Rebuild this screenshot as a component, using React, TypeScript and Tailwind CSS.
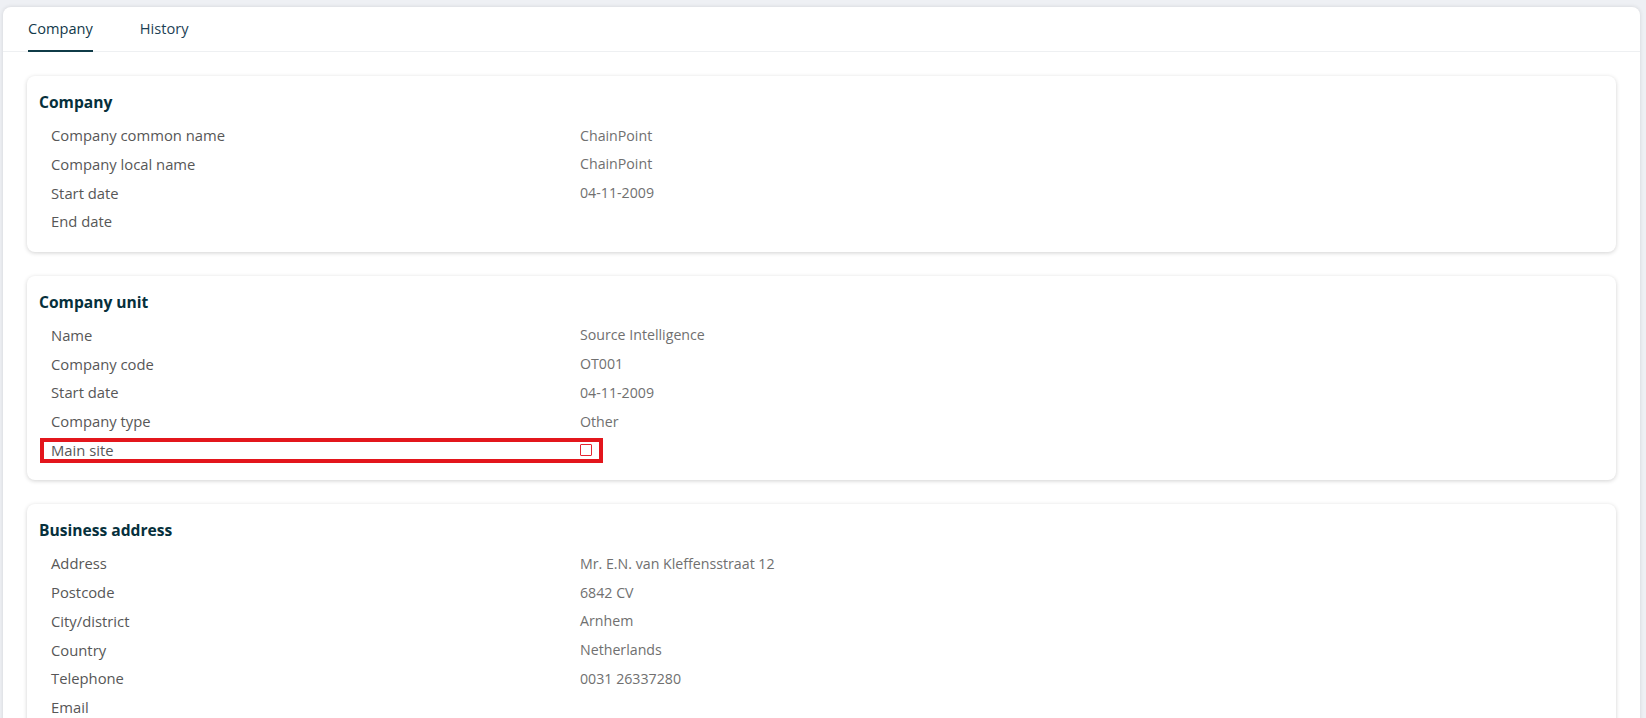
import React from 'react';

type Row = { label: string; value?: string; checkbox?: boolean; marked?: boolean };

const sections: { title: string; rows: Row[] }[] = [
  {
    title: 'Company',
    rows: [
      { label: 'Company common name', value: 'ChainPoint' },
      { label: 'Company local name', value: 'ChainPoint' },
      { label: 'Start date', value: '04-11-2009' },
      { label: 'End date' },
    ],
  },
  {
    title: 'Company unit',
    rows: [
      { label: 'Name', value: 'Source Intelligence' },
      { label: 'Company code', value: 'OT001' },
      { label: 'Start date', value: '04-11-2009' },
      { label: 'Company type', value: 'Other' },
      { label: 'Main site', checkbox: true, marked: true },
    ],
  },
  {
    title: 'Business address',
    rows: [
      { label: 'Address', value: 'Mr. E.N. van Kleffensstraat 12' },
      { label: 'Postcode', value: '6842 CV' },
      { label: 'City/district', value: 'Arnhem' },
      { label: 'Country', value: 'Netherlands' },
      { label: 'Telephone', value: '0031 26337280' },
      { label: 'Email' },
    ],
  },
];

const InfoRow: React.FC<{ row: Row }> = ({ row }) => (
  <div className="relative flex items-center h-[28.7px] pl-3">
    {row.marked && (
      <div className="absolute left-[1px] top-[2px] w-[563px] h-[25px] border-[4px] border-[#e3161c]" />
    )}
    <div className="w-[529px] shrink-0 text-[14.8px] font-medium text-[#575757]">{row.label}</div>
    <div className="text-[14.2px] text-[#707070]">
      {row.checkbox ? (
        <div className="w-[12px] h-[12px] border border-[#e52530] bg-white rounded-[1px]" />
      ) : (
        row.value
      )}
    </div>
  </div>
);

export default function App() {
  return (
    <div className="min-h-screen bg-[#eef0f4] pt-[7px] pl-[3px] pr-[6px] font-['Open_Sans',sans-serif]">
      <div className="bg-white rounded-lg shadow-[0_0_4px_rgba(0,0,0,0.12)]">
        {/* Tabs */}
        <div className="flex h-[45px] border-b border-[#eef0f2] pl-[25px] gap-[47px]">
          <div className="relative flex items-center text-[14.6px] text-[#12394a]">
            Company
            <div className="absolute left-0 right-0 bottom-[-1px] h-[2px] bg-[#0f3b47]" />
          </div>
          <div className="flex items-center text-[14.6px] text-[#1d3f55]">History</div>
        </div>

        <div className="flex flex-col gap-[24px] px-[24px] pt-[24px] pb-6">
          {sections.map((s) => (
            <div
              key={s.title}
              className="bg-white rounded-lg shadow-[0_1px_4px_rgba(0,0,0,0.18)] px-3 pt-[15px] pb-[16px]"
            >
              <div className="h-[24px] flex items-center text-[15.6px] font-bold text-[#06303c] mb-[6px]">
                {s.title}
              </div>
              {s.rows.map((r) => (
                <InfoRow key={r.label} row={r} />
              ))}
            </div>
          ))}
        </div>
      </div>
    </div>
  );
}
